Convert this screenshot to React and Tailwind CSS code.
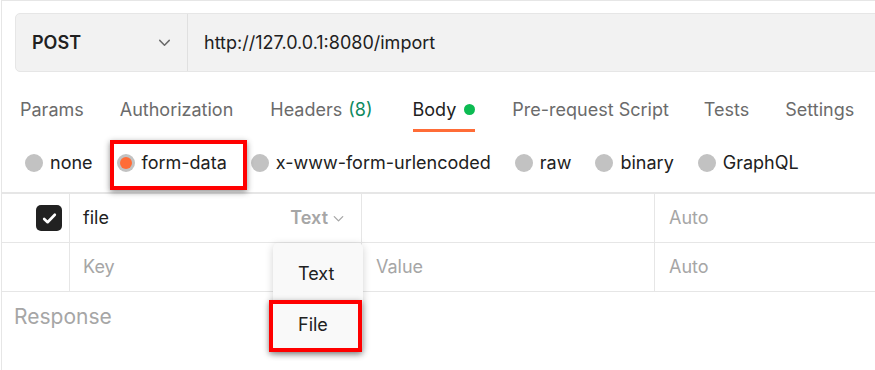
import React from "react";

const font = { fontFamily: "Inter, 'Noto Sans', sans-serif" };

function Chevron({ className }) {
  return (
    <svg viewBox="0 0 16 16" className={className} fill="none" stroke="currentColor" strokeWidth="1.4" strokeLinecap="round" strokeLinejoin="round">
      <path d="M3.5 6l4.5 4.5L12.5 6" />
    </svg>
  );
}

function Radio({ label, active }) {
  return (
    <div className="flex items-center gap-[7px]">
      {active ? (
        <span className="w-[18px] h-[18px] rounded-full bg-[#c2c2c2] flex items-center justify-center">
          <span className="w-[12px] h-[12px] rounded-full bg-[#ff6c37]" />
        </span>
      ) : (
        <span className="w-[18px] h-[18px] rounded-full bg-[#c2c2c2]" />
      )}
      <span className="text-[18px] leading-[24px] text-[#212121]">{label}</span>
    </div>
  );
}

export default function App() {
  return (
    <div style={font} className="relative w-[875px] h-[370px] overflow-hidden bg-white">
      <div className="ml-px h-full border-l border-t border-[#e6e6e6]">
        {/* URL bar */}
        <div className="ml-[13px] mt-[12px] w-[900px] h-[59px] flex rounded-[5px] bg-[#f2f2f2] border border-[#e6e6e6]">
          <div className="w-[172px] shrink-0 flex items-center justify-between pl-[16px] pr-[14px] border-r border-[#e0e0e0]">
            <span className="text-[18px] font-semibold text-[#212121]">POST</span>
            <Chevron className="w-[17px] h-[17px] text-[#6b6b6b]" />
          </div>
          <div className="flex items-center pl-[16px] text-[18px] text-[#212121]">http://127.0.0.1:8080/import</div>
        </div>

        {/* Tabs */}
        <div className="flex gap-[37px] pl-[18px] mt-[18px] h-[42px] text-[18px] leading-[24px] text-[#6b6b6b] whitespace-nowrap">
          <div className="flex items-center pb-[3px]">Params</div>
          <div className="flex items-center pb-[3px] -ml-px">Authorization</div>
          <div className="flex items-center pb-[3px]">
            Headers<span className="ml-[6px] text-[#0f8a5f]">(8)</span>
          </div>
          <div className="flex items-center ml-[3px] border-b-[3px] border-[#ff6c37] text-[#212121]">
            Body<span className="ml-[8px] w-[11px] h-[11px] rounded-full bg-[#0cbb52]" />
          </div>
          <div className="flex items-center pb-[3px]">Pre-request Script</div>
          <div className="flex items-center pb-[3px] -ml-[2px]">Tests</div>
          <div className="flex items-center pb-[3px] -ml-px">Settings</div>
        </div>

        {/* Radios */}
        <div className="flex items-center gap-[24px] pl-[23px] pt-[2px] h-[60px] whitespace-nowrap">
          <Radio label="none" />
          <Radio label="form-data" active />
          <Radio label="x-www-form-urlencoded" />
          <Radio label="raw" />
          <Radio label="binary" />
          <Radio label="GraphQL" />
        </div>

        {/* Table */}
        <div className="border-t-2 border-[#e6e6e6] text-[18px] leading-[24px]">
          <div className="flex h-[49px] border-b border-[#e6e6e6]">
            <div className="w-[68px] shrink-0 border-r border-[#e6e6e6] flex items-center justify-end pr-[7px]">
              <span className="w-[26px] h-[26px] rounded-[5px] bg-[#212121] flex items-center justify-center">
                <svg viewBox="0 0 16 16" className="w-[17px] h-[17px]" fill="none" stroke="white" strokeWidth="2.5" strokeLinecap="round" strokeLinejoin="round">
                  <path d="M3 8.5l3.2 3L13 4.5" />
                </svg>
              </span>
            </div>
            <div className="w-[292px] shrink-0 border-r border-[#e6e6e6] flex items-center justify-between pl-[13px] pr-[15px]">
              <span className="text-[#212121]">file</span>
              <span className="flex items-center gap-[3px] font-semibold text-[#a6a6a6]">
                Text
                <Chevron className="w-[15px] h-[15px]" />
              </span>
            </div>
            <div className="w-[293px] shrink-0 border-r border-[#e6e6e6]" />
            <div className="flex items-center pl-[14px] text-[#a6a6a6]">Auto</div>
          </div>
          <div className="flex h-[49px] border-b border-[#e6e6e6]">
            <div className="w-[68px] shrink-0 border-r border-[#e6e6e6]" />
            <div className="w-[292px] shrink-0 border-r border-[#e6e6e6] flex items-center pl-[13px] text-[#a6a6a6]">Key</div>
            <div className="w-[293px] shrink-0 border-r border-[#e6e6e6] flex items-center pl-[14px] text-[#a6a6a6]">Value</div>
            <div className="flex items-center pl-[14px] text-[#a6a6a6]">Auto</div>
          </div>
        </div>

        <div className="pl-[12px] pt-[11px] text-[21px] leading-[28px] text-[#a6a6a6]">Response</div>
      </div>

      {/* Dropdown menu */}
      <div className="absolute left-[273px] top-[243px] w-[90px] h-[108px] rounded-[5px] bg-[#f9f9f9] shadow-[0_2px_8px_rgba(0,0,0,0.18)] text-[18px] leading-[24px] text-[#212121]">
        <div className="h-[57px] flex items-center pl-[25px] pt-[5px]">Text</div>
        <div className="h-[49px] flex items-center pl-[25px]">File</div>
      </div>

      {/* Annotation boxes */}
      <div className="absolute left-[110px] top-[140px] w-[137px] h-[50px] border-4 border-[#ff0000] shadow-[0_2px_6px_rgba(0,0,0,0.45)]" />
      <div className="absolute left-[269px] top-[300px] w-[93px] h-[52px] border-4 border-[#ff0000] shadow-[0_2px_6px_rgba(0,0,0,0.45)]" />
    </div>
  );
}
